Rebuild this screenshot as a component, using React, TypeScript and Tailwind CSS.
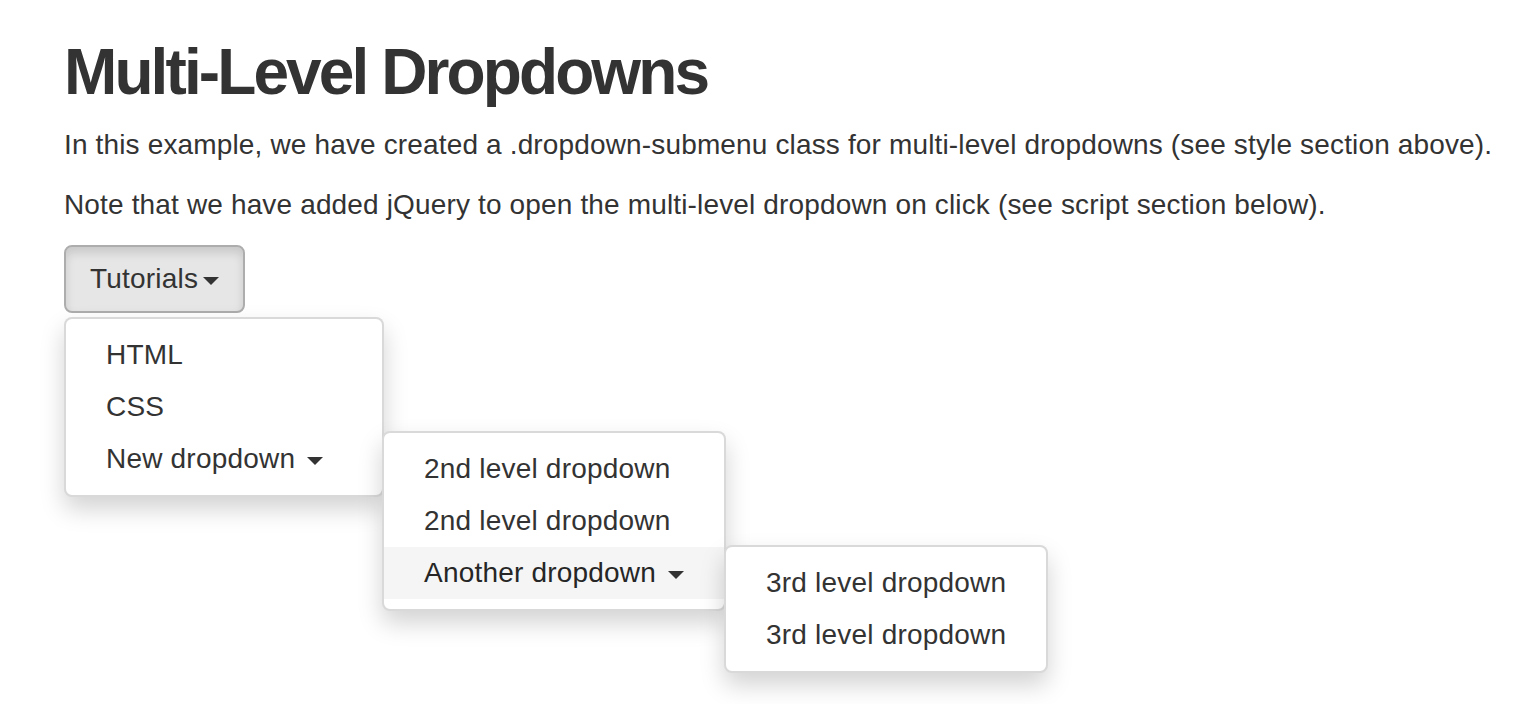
import React from "react";

/** Bootstrap-style caret: a small downward triangle. */
function Caret({ tight = false }: { tight?: boolean }) {
  return (
    <span
      className={`${tight ? "-ml-[3px]" : "ml-[4px]"} inline-block h-0 w-0 align-middle border-x-[8px] border-t-[8px] border-x-transparent border-t-[#333]`}
    />
  );
}

const menuCls =
  "absolute z-10 min-w-[320px] whitespace-nowrap rounded-[8px] border-2 border-[rgba(0,0,0,0.15)] bg-white py-[10px] text-left text-[28px] tracking-[0.2px] shadow-[0_12px_24px_rgba(0,0,0,0.175)]";

const itemCls = "block px-[40px] py-[6px] leading-[40px] text-[#333]";

export default function App() {
  return (
    <div className="min-h-screen bg-white pl-[64px] pr-[16px] pt-[37px] font-['Liberation_Sans',Arial,sans-serif] text-[#333]">
      <h1 className="mb-[18px] text-[64px] font-bold leading-[70px] tracking-[-2.9px]">
        Multi-Level Dropdowns
      </h1>
      <p className="mb-[20px] text-[28px] leading-[40px] tracking-[0.15px]">
        In this example, we have created a .dropdown-submenu class for multi-level dropdowns (see style section above).
      </p>
      <p className="mb-[20px] text-[28px] leading-[40px] tracking-[0.15px]">
        Note that we have added jQuery to open the multi-level dropdown on click (see script section below).
      </p>

      <div className="relative inline-block">
        <button
          type="button"
          className="rounded-[8px] border-2 border-[#adadad] bg-[#e6e6e6] px-[24px] py-[12px] text-[28px] leading-[40px] tracking-[0.2px] text-[#333] shadow-[inset_0_6px_10px_rgba(0,0,0,0.125)]"
        >
          Tutorials <Caret tight />
        </button>

        <ul className={`${menuCls} left-0 top-full mt-[4px]`}>
          <li>
            <a className={itemCls}>HTML</a>
          </li>
          <li>
            <a className={itemCls}>CSS</a>
          </li>
          <li className="relative">
            <a className={itemCls}>
              New dropdown <Caret />
            </a>
            <ul className={`${menuCls} left-full top-0 -mt-[2px]`}>
              <li>
                <a className={itemCls}>2nd level dropdown</a>
              </li>
              <li>
                <a className={itemCls}>2nd level dropdown</a>
              </li>
              <li className="relative">
                <a className={`${itemCls} bg-[#f5f5f5] text-[#262626]`}>
                  Another dropdown <Caret />
                </a>
                <ul className={`${menuCls} left-full top-0 -mt-[2px]`}>
                  <li>
                    <a className={itemCls}>3rd level dropdown</a>
                  </li>
                  <li>
                    <a className={itemCls}>3rd level dropdown</a>
                  </li>
                </ul>
              </li>
            </ul>
          </li>
        </ul>
      </div>
    </div>
  );
}
